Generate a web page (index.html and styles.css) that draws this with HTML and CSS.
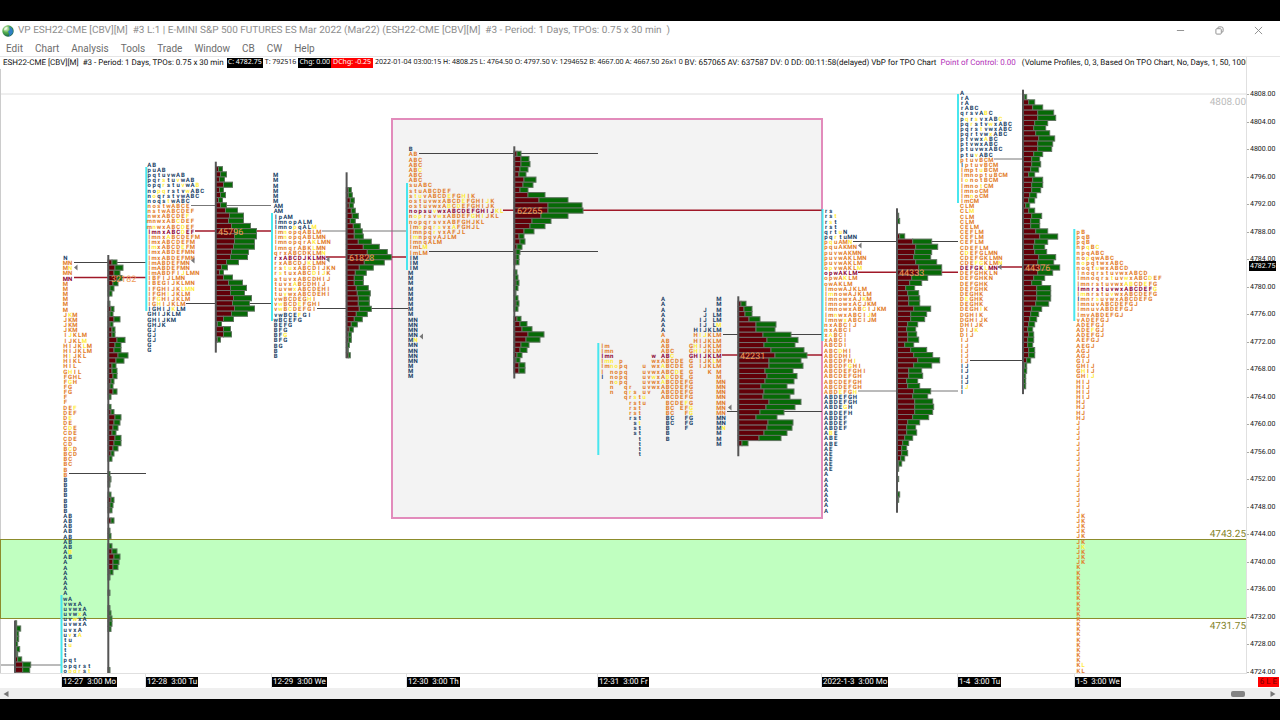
FILE: index.html
```html
<!DOCTYPE html>
<html lang="en">
<head>
<meta charset="utf-8">
<title>VP ESH22-CME</title>
<link rel="stylesheet" href="styles.css">
</head>
<body>
<div class="app">
  <header class="titlebar">
    <svg class="logo" viewBox="0 0 12 12" aria-hidden="true">
      <defs><radialGradient id="globe" cx="0.35" cy="0.3" r="0.75"><stop offset="0" stop-color="#e9f8d8"/><stop offset="0.45" stop-color="#58b04c"/><stop offset="1" stop-color="#0d5a4a"/></radialGradient></defs>
      <circle cx="6" cy="6" r="5.7" fill="url(#globe)"/>
      <path d="M7 1.5C9.6 2.2 11.2 4.6 10.9 7.3 10 9.500 8.500 10.700 6.800 11.200 7.800 9.500 7.400 8.300 6.300 7.400 5.600 6.600 6.700 5.800 7.500 5.200 8.200 4.200 7.300 3 7 1.500Z" fill="#2f7fc4"/>
      <path d="M2 4.200C3 2.400 4.400 1.800 5.600 2 5.300 3.600 4 4.700 2.500 5.600Z" fill="#f4fbe9" opacity="0.85"/>
    </svg>
    <h1 class="title">VP ESH22-CME [CBV][M]  #3 L:1 | E-MINI S&amp;P 500 FUTURES ES Mar 2022 (Mar22) (ESH22-CME [CBV][M]  #3 - Period: 1 Days, TPOs: 0.75 x 30 min  )</h1>
    <div class="controls">
      <button class="control" aria-label="Minimize"><svg viewBox="0 0 10 10"><path d="M1 5H9"/></svg></button>
      <button class="control" aria-label="Restore"><svg viewBox="0 0 10 10"><rect x="1" y="3" width="6" height="6" rx="1"/><path d="M3 2.500Q3 1 4.500 1H7Q9 1 9 3V5.500Q9 7 7.500 7"/></svg></button>
      <button class="control" aria-label="Close"><svg viewBox="0 0 10 10"><path d="M1 1L9 9M9 1L1 9"/></svg></button>
    </div>
  </header>
  <nav class="menu">
    <button>Edit</button><button>Chart</button><button>Analysis</button><button>Tools</button><button>Trade</button><button>Window</button><button>CB</button><button>CW</button><button>Help</button>
  </nav>
  <main class="workspace">
    <section class="pane">
      <div class="info">
        <span class="symbol">ESH22-CME [CBV][M]  #3 - Period: 1 Days, TPOs: 0.75 x 30 min</span>
        <span class="tag">C: 4782.75</span>
        <span class="trades">T: 792516</span>
        <span class="tag">Chg: 0.00</span>
        <span class="tag tag-down">DChg: -0.25</span>
        <span class="quote">2022-01-04 03:00:15 H: 4808.25 L: 4764.50 O: 4797.50 V: 1294652 B: 4667.00 A: 4667.50 26x1 0 </span>
        <span class="totals">BV: 657065 AV: 637587 DV: 0 DD: 00:11:58(delayed) VbP for TPO Chart</span>
        <span class="poc-info">Point of Control: 0.00</span>
        <span class="study">(Volume Profiles, 0, 3, Based On TPO Chart, No, Days, 1, 50, 1000</span>
      </div>
      <svg class="chart" id="chart" viewBox="0 69 1246 604" preserveAspectRatio="none" role="img" aria-label="TPO and volume profile chart"></svg>
    </section>
    <aside class="prices" id="prices"><span class="last-price">4782.75</span></aside>
  </main>
  <div class="dates">
    <span></span><span><b>12-27  3:00 Mo</b></span><span><b>12-28  3:00 Tu</b></span><span><b>12-29  3:00 We</b></span><span><b>12-30  3:00 Th</b></span><span><b>12-31  3:00 Fr</b></span><span><b>2022-1-3  3:00 Mo</b></span><span><b>1-4  3:00 Tu</b></span><span><b>1-5  3:00 We</b></span>
    <i class="status">6 L E</i>
  </div>
  <div class="scroll">
    <button aria-label="Scroll left"><svg viewBox="0 0 6 6"><path d="M5.500 0V6L0.500 3Z"/></svg></button>
    <span class="thumb"></span>
    <button aria-label="Scroll right"><svg viewBox="0 0 6 6"><path d="M0.500 0V6L5.500 3Z"/></svg></button>
  </div>
</div>
<script src="chart.js"></script>
</body>
</html>
```
FILE: styles.css
```css
* { box-sizing: border-box; }
body { margin: 0; background: #000; font-family: Roboto, "Open Sans", sans-serif; text-rendering: geometricPrecision; }
button { border: 0; background: none; padding: 0; margin: 0; font: inherit; color: inherit; }
.app { display: flex; flex-direction: column; height: 100vh; border: solid #000; border-width: 21px 0; background: #fff; }
.titlebar { display: flex; align-items: center; height: 19px; flex: none; padding: 0 12px 0 2px; }
.logo { width: 12px; height: 12px; flex: none; }
.title { flex: 1; margin: 0 0 0 4px; font-size: 10px; font-weight: 400; line-height: 16px; color: #8e8e8e; white-space: pre; }
.controls { display: flex; gap: 19px; }
.control { width: 20px; height: 18px; display: flex; align-items: center; justify-content: center; }
.control svg { width: 9px; height: 9px; fill: none; stroke: #888; stroke-width: 1; }
.menu { display: flex; gap: 12px; height: 16px; flex: none; padding-left: 6px; font-size: 10px; line-height: 18px; color: #6c6c6c; }
.workspace { flex: 1; min-height: 0; display: flex; border-top: 1px solid #e6e6e6; }
.pane { flex: 1; min-width: 0; display: flex; flex-direction: column; border: solid #e0e0e0; border-width: 0 1px 1px 0; }
.info { display: flex; align-items: center; height: 12px; flex: none; padding: 0 0 1px 3px; overflow: hidden; font-size: 8px; line-height: 10px; color: #111; white-space: pre; }
.info span { flex: none; }
.info .symbol { margin-right: 3px; }
.info .tag, .info .trades, .info .quote { font-family: "Noto Sans", "Open Sans", sans-serif; font-size: 7px; }
.info .tag { background: #000; color: #fff; padding: 0 1px; }
.info .tag-down { background: #f00; padding: 0 2px; }
.info .trades { margin: 0 2px; }
.info .quote { margin-left: 2px; }
.info .poc-info { color: #b22fb8; margin: 0 6px 0 4px; }
.chart { display: block; width: 100%; flex: 1; min-height: 0; overflow: hidden; }
.prices { position: relative; width: 33px; flex: none; display: flex; flex-direction: column; justify-content: space-between; padding-top: 32px; overflow: hidden; font-size: 7px; line-height: 10px; color: #111; }
.price { position: relative; padding-left: 3px; height: 10px; flex: none; }
.price::before { content: ""; position: absolute; left: 0; top: 5px; width: 2px; height: 1px; background: #aaa; }
.price:last-child { margin-bottom: -3px; }
.last-price { position: absolute; z-index: 1; left: 2px; top: 33%; padding: 0 1px; background: #000; color: #fff; line-height: 10px; }
.dates { display: grid; grid-template-columns: 62fr 84fr 126fr 135fr 191fr 224fr 136fr 117fr 183fr 22px; height: 14px; flex: none; align-items: center; font-size: 8px; line-height: 10px; }
.dates span { height: 14px; padding: 3px 0 0 0; border-right: 1px solid #e2e2e2; white-space: pre; display: flex; align-items: flex-start; }
.dates span:nth-of-type(9) { border-right: 0; }
.dates b { font-weight: 400; background: #000; color: #fff; padding: 0 1px; }
.status { font-style: normal; background: #f00; color: #700; text-align: center; margin: 2px 1px 0 0; }
.scroll { display: flex; align-items: center; height: 11px; flex: none; padding: 0 4px 0 3px; background: #efefef; }
.scroll button { width: 6px; height: 11px; display: flex; align-items: center; }
.scroll svg { width: 6px; height: 6px; fill: #777; }
.thumb { width: 14px; height: 6px; margin: 0 25px 0 auto; border-radius: 2px; background: #848484; }

.tpo { font: 700 6px Roboto, "Open Sans", sans-serif; text-anchor: middle; }
.out { fill: #213f66; }
.va { fill: #e27c28; }
.poc { fill: #8c0030; }
.single { fill: #ffec38; }
.bid { fill: #620008; stroke: #746c6c; stroke-width: 1; }
.ask { fill: #066a06; stroke: #5f745f; stroke-width: 1; }
.spine { fill: #555; }
.open-range { fill: #48e6ee; }
.edge { stroke: #444; stroke-width: 1; }
.edge-soft { stroke: #777; stroke-width: 1; }
.frame { stroke: #ccc; stroke-width: 1; }
.control-line { stroke: #a01828; stroke-width: 1.500; }
.volume { font: 9px Roboto, "Open Sans", sans-serif; fill: #f09a58; }
.marker { fill: #777; }
.range-box { fill: #f3f3f3; stroke: #e28bbb; stroke-width: 2; }
.zone { fill: #c0ffc0; stroke: #8c8c2c; stroke-width: 1; }
.zone-label { font: 10px Roboto, "Open Sans", sans-serif; fill: #84842a; text-anchor: end; }
.high-line { stroke: #dedede; stroke-width: 1; }
.high-label { font: 10px Roboto, "Open Sans", sans-serif; fill: #bcbcbc; text-anchor: end; }
```
FILE: chart.js
```js
const NS = "http://www.w3.org/2000/svg";
const chart = document.getElementById("chart");
const ROW = 5.16;
const CELL = 4.8;
const PERIODS = "lmnopqrstuvwxABCDEFGHIJKLMN";

function add(name, attrs, text, parent = chart) {
  const node = document.createElementNS(NS, name);
  for (const key in attrs) node.setAttribute(key, attrs[key]);
  if (text) node.textContent = text;
  parent.appendChild(node);
  return node;
}
const rep = (s, n) => Array(n).fill(s).join(" ");

// rows: letters per price step; "~" marks a single print, "^" a letter outside the value area.
// vol: "bid,total" widths per price step. lines: [class, y, x1, x2].
const sessions = [
  { x: 65.3, y: 258, va: [1, 42], poc: 4, range: [61.5, 595, 673], axis: 108, count: "32182", cx: 111, cy: 282,
    rows: "N MN M~N MN MN " + rep("M", 6) + " J~KM JKM JKM JKM I~JKLM IJKL~M HIJK~LM HIJKLM H~IJKL HIKL HIL G~HIL FGHL F~GH FG FG F F DE~F DEF D~E DE C~DE CDE CDE CD B~CD BCD BC BC B B " + rep("B", 7) + " " + rep("AB", 7) + " A~B AB " + rep("A", 7) + " wA vwxA uvwxA uvw~xA uv~wxA uvwxA uvxA u~vx~A tu t~u t t pqt opqrst o~p~q~rs~t",
    vol: "0,1 4,9 7,15 6,12 9,14 5,10 2,6 1,4 0,1 1,2 3,6 2,5 6,12 2,5 4,7 4,7 9,17 7,13 6,13 10,20 8,16 4,8 4,9 5,9 3,6 2,5 5,9 1,3 0,1 1,3 3,6 7,13 6,12 5,10 4,8 7,13 6,13 5,10 3,6 1,4 0,1 0,1 0,2 2,3 1,2 0,1 1,3 3,6 2,5 2,4 0,1 3,6 0,1 1,2 1,3 0,1 1,4 4,9 6,12 5,11 5,10 2,5 1,2 0,1 0,1 1,2 0,1 0,1 1,2 1,3 2,4 1,4 1,3 0,1 0,1 0,1 0,1 0,1 0,1 0,1 1,2",
    lines: [["edge", 262.5, 74, 146], ["control-line", 277.5, 74, 146], ["edge", 473.5, 69, 146]], mark: [76, 267.5] },
  { x: 149.3, y: 164.7, va: [8, 27], poc: 13, range: [146.3, 167, 311], axis: 215.5, count: "45796", cx: 218, cy: 235,
    rows: "AB puAB pqtuvwAB pqr~stu~vwAB opq~rstu~vwA~B no~p~qrstv~wABC n~oqrstvwABC noqs~twABC nostwABCE nstwABCDEF nwxABCDE~F mnwxAB~CDEF m~nwxABC~DEF lmnxABC~DEF lmnx~ABCDEFM lmxABCDEFM l~mxABCD~EFM lmxABDEFMN lmxABDEFMN lmABDEFMN lmABDEFMN lmABDFI~JLMN IBFIJLMN IBEGIJKLMN IFGHIJK~L~M~N IFGH~IJKLM IF~GHIJKLM IG~HIJKLM IGHIJ~KLM GHIJKLM GHIJKM GHJK GJ GJ GJ G G",
    vol: "0,1 3,7 5,11 4,9 8,17 4,8 5,10 3,7 5,11 10,22 14,28 13,28 16,35 19,41 19,41 19,39 18,39 16,33 15,32 11,23 6,12 4,8 8,17 13,27 15,31 15,29 18,36 17,34 19,39 16,32 8,18 2,6 8,15 8,16 2,5 0,1 0,1",
    lines: [["edge-soft", 205.5, 191, 271], ["control-line", 231, 195, 271], ["edge", 303.5, 186, 271]], mark: [193, 260.5] },
  { x: 275.7, y: 175.3, va: [11, 26], poc: 16, range: [272, 213, 321], axis: 346.3, count: "61828", cx: 349, cy: 261,
    rows: rep("M", 6) + " AM AM lpAM lmnopALM lmno~pqAL~M lm~nopqABLM lm~nopqABLMN lmnopqrA~KLMN lmnqrABK~LMN qrxABCDKLM~N rxABCDJKLMN rxABCDJ~KLMN rs~t~uxABCDIJKN r~stuxABC~DI~JK stuvxABCDHIJ tuvx~ABCDHIJ tuvw~xABCDEHI tu~vwxABCDEHI vwBCDEG~HI v~wBCD~EFGHI v~wB~CDEFGI vwBCE~FGI wBCEFG BEFG BFG BF~G BFG BG B B",
    vol: "0,1 0,1 0,1 2,5 2,6 4,8 3,7 5,9 6,12 4,9 7,14 8,16 8,17 12,25 17,33 21,41 23,45 18,38 13,27 9,20 8,17 8,17 10,22 11,24 12,23 12,23 13,25 10,21 8,16 5,11 3,7 2,5 2,5 1,3 1,2 2,4",
    lines: [["edge-soft", 231, 322, 406], ["control-line", 257, 326, 406], ["edge", 308.5, 317, 408]], mark: [328, 259.5] },
  { x: 410.7, y: 149.3, va: [1, 20], poc: 12, range: [407, 183, 270], axis: 514, count: "62265", cx: 517, cy: 214,
    rows: "B AB ABC ABC AB~C ABC ABC suABC stuABCDEF s~t~uvABCD~EFG~HIK ostuvwxABCD~EFGHI~JK ostuvwxA~BC~DEFGHIJK nopsu~vwxABCDEFGHIJ~K~L n~o~prsv~wxABDEF~GH~IJKL nopqrsvxABFGHJKL lm~opq~r~svx~AFGHJL lmnpq~rvxAFJL l~mnpqvAJLM lmnqALM lmL~M lmLM lM lM lM " + rep("M", 9) + " MN MN MN MN M~N MN MN MN MN M M M",
    vol: "0,1 3,7 7,15 7,16 6,14 5,12 10,22 9,19 6,14 14,31 25,54 34,68 34,69 27,54 18,37 16,31 10,20 5,10 6,11 3,8 2,6 2,5 2,5 0,1 1,3 1,4 2,5 1,4 1,2 1,4 2,5 1,4 0,1 3,7 6,13 8,18 14,30 12,26 7,15 6,13 3,8 2,6 5,11 5,11 0,1",
    lines: [["edge", 153.5, 419, 598], ["control-line", 210.3, 503, 822], ["edge", 251.5, 429, 598]], mark: [421.5, 336.5] },
  { x: 602.3, y: 299.3, cell: 4.67, split: true, va: [7, 22], poc: 11, range: [598.3, 343, 455], axis: 738, count: "42231", cx: 740, cy: 359,
    rows: "AM AM AJM AJLM AIJLM AIJL~M AHIJKLM AH~I~JKLM ABHIJKLM lmABG~HIJKLM lmnABCG~H~IJKLM lmnwAB~CGHIJKLM l~m~npwxABCDEGIJK~LM lm~n~opquwx~ABCDEGIJKLM lnopquvwxABC~DEGKM ^lnopquv~wxA~BCDEGM n~opquvwx~ABCDEFGMN nqruvwxABCDEFGMN nq~rsuvABCDEFGMN qr~st~uABCDEFGMN rstuBCDE~FGMN rstBCEF~GMN rstBCF~GMN rstBCFGMN s~tBCFGMN stBFM~N stBM tBM tM t t",
    vol: "0,1 3,8 6,14 7,14 11,22 18,38 18,37 25,53 29,60 26,57 33,66 37,69 31,63 31,65 27,55 29,59 27,56 23,49 26,56 25,52 31,63 28,57 22,46 18,39 30,55 29,54 26,49 21,43 4,10 0,1 0,1",
    lines: [["edge", 334.5, 723, 822], ["control-line", 355, 722, 822], ["edge", 411.5, 727, 822]], mark: [730, 407.5] },
  { x: 826, y: 211.3, va: [6, 35], poc: 12, range: [822.5, 209, 341], axis: 896.7, count: "44333", cx: 899, cy: 276,
    rows: "rs rs~t r~st rst qrt~uN pq~rtuMN p~quAM~N pquAKMN puvwAKMN puvwAKLMN puvwAKLM o~pvwAKL~M opwAKLM opwA~KLM owAKLM lmowAJKLM l~mnowAJKLM lmnowxAJ~KM lmnowxACJKM lmnowxAB~CIJKM lm~nwxABCI~JM lmnw~xABCIJM nxABCIJ nxABCI x~ABCI xABCI ABCDI ABC~DHI ABCDHI ABCDFH~I ABCDF~GHI ABCDEFGHI " + rep("ABCDEFGH", 3) + " ABD~EFG~H ABDEFGH ABDEFGH ABDE~GH ABDEFH ABDEF ABDEF ABDEF A~BE ABE ABE " + rep("AE", 5) + " " + rep("A", 8),
    vol: "0,1 1,2 1,3 0,1 0,1 3,8 16,35 19,41 18,35 17,34 19,40 22,45 22,45 15,31 13,25 9,18 11,22 12,23 12,23 17,34 14,30 14,28 11,21 10,19 11,20 11,22 8,17 14,30 17,36 21,43 17,35 12,25 12,26 10,21 11,23 17,34 16,31 18,36 18,37 18,36 16,32 11,23 10,19 10,20 8,16 6,12 5,10 5,11 4,8 2,5 1,2 0,1 1,2 0,1 0,1 1,3 1,2 0,1 0,1",
    lines: [["edge", 241.5, 853, 958], ["control-line", 272.3, 858, 958], ["edge-soft", 391, 858, 958]], mark: [860, 245.5] },
  { x: 962, y: 92.7, va: [13, 52], poc: 34, range: [958, 94, 203], axis: 1022.7, count: "44376", cx: 1025, cy: 271,
    rows: "A rA rA rABC qrsvA~BC p~qr~svxAB~C pq~rstv~wxABC pqrs~tvwxABC pqrtvw~xABC ptvwx~ABC ptvwxABC ptuvwxABC ptu~vABC ptuvBCM ^lptuvBCM lmpt~uBCM lmnoptuBCM l~onotBCM lmno~tCM lmnoCM lm~noCM lmCM CLM CL~M CLM CLM CELM CEFLM CEFLM CEFLM CDEFLM C~DEFGLMN CDEFGKLMN CDE~F~GKLM~N DEFGK~LMN DEFGHKLN DEFGHKN DEFGHK DEFGHK DEGHK D~EGHK DEGHK DEGH~IK DGHIK DGHIJK DHIJK DIJ~K DIJ " + rep("IJ", 9) + " I~J I",
    vol: "0,1 2,4 6,12 10,20 15,31 15,33 12,25 11,23 13,27 16,32 15,30 15,29 11,20 9,17 9,18 8,16 6,12 10,20 9,20 9,18 7,14 6,12 3,7 6,12 9,19 8,17 8,17 13,25 17,35 12,25 11,22 12,24 16,33 15,31 18,37 15,30 11,22 9,19 14,28 14,28 14,28 13,26 9,19 8,16 7,14 6,12 5,10 6,11 5,11 5,10 6,12 6,12 4,8 2,4 1,4 1,3 1,3 1,3 0,1",
    lines: [["edge-soft", 159, 994, 1022], ["control-line", 267, 998, 1022], ["edge", 360.5, 970, 1022]], mark: [1000, 267] },
  { x: 1078.3, y: 232, va: [0, 85], poc: 11, range: [1074.3, 229, 321], lines: [],
    rows: "pB pqB pqB np~qB~C npqABC no~pqwABC n~opqtwxABC noqt~uwxABCD lnoqrstuvwxABCD lmnoqrs~tuv~wxABC~DEF lmnrstuvwx~A~BCD~EFG lmnrstuvwxABCDEF~G l~mnrstu~vwxABCDEFG ^lmnr~suvwxABCDEFG lmnuvABCDEFGJ lmnuvABDEFGJ lmvABDEFGJ vADEFGJ ADEFGJ ADE~FGJ ADEFGJ AEFGJ AEGJ AGJ AGJ GIJ GHIJ G~HIJ GH~I~J " + rep("HIJ", 4) + " " + rep("HJ", 4) + " " + rep("J", 18) + " " + rep("JK", 6) + " J~K JK JK JK " + rep("K", 19) + " K~L KL" }
];

function drawBars(axis, y, vol) {
  const rows = vol.split(" ");
  rows.forEach((pair, i) => {
    const [bid, total] = pair.split(",").map(Number);
    const top = (y + i * ROW - 3.2).toFixed(2);
    if (total < 2) return;
    if (bid > 0) add("rect", { class: "bid", x: axis, y: top, width: bid, height: ROW });
    add("rect", { class: "ask", x: axis + bid, y: top, width: total - bid, height: ROW });
  });
  add("rect", { class: "spine", x: axis - 0.7, y: y - 3, width: 2, height: rows.length * ROW });
}

function drawLetters(s) {
  s.rows.split(" ").forEach((row, i) => {
    const inside = i >= s.va[0] && i <= s.va[1];
    const base = i === s.poc ? "poc" : inside ? "va" : "out";
    const line = add("text", { class: "tpo", y: (s.y + i * ROW + 2).toFixed(2) });
    let kind = base, col = 0;
    for (const ch of row) {
      if (ch === "~") { kind = "single"; continue; }
      if (ch === "^") { kind = "out"; continue; }
      const slot = s.split ? PERIODS.indexOf(ch) : col;
      add("tspan", { class: kind, x: (s.x + slot * (s.cell || CELL)).toFixed(1) }, ch, line);
      kind = base;
      col++;
    }
  });
}

add("line", { class: "high-line", x1: 0, x2: 1246, y1: 94, y2: 94 });
add("text", { class: "high-label", x: 1246, y: 104.5 }, "4808.00");
add("rect", { class: "range-box", x: 392, y: 119, width: 430, height: 399 });
add("rect", { class: "zone", x: 0.5, y: 539.5, width: 1247, height: 79 });
add("text", { class: "zone-label", x: 1246, y: 536.5 }, "4743.25");
add("text", { class: "zone-label", x: 1246, y: 629 }, "4731.75");
add("line", { class: "edge-soft", x1: 0, x2: 61, y1: 665, y2: 665 });
for (const s of sessions) for (const [kind, y, x1, x2] of s.lines) add("line", { class: kind, x1, x2, y1: y, y2: y });
drawBars(14.700, 624, "1,2 2,6 2,4 2,4 1,3 2,5 2,3 3,7 8,16 8,15");
for (const s of sessions) {
  if (s.vol) drawBars(s.axis, s.y, s.vol);
  const [x, top, bottom] = s.range;
  add("rect", { class: "open-range", x: x - 1, y: top, width: 2, height: bottom - top });
  drawLetters(s);
  if (s.count) add("text", { class: "volume", x: s.cx, y: s.cy }, s.count);
  if (s.mark) add("path", { class: "marker", d: `M${s.mark[0] - 2} ${s.mark[1]}l3.500 -3v6z` });
}
add("line", { class: "frame", x1: 0.5, x2: 0.5, y1: 69, y2: 539 });
add("line", { class: "frame", x1: 0.5, x2: 0.5, y1: 619, y2: 673 });

const prices = document.getElementById("prices");
for (let p = 4808; p >= 4724; p -= 4) {
  const label = document.createElement("span");
  label.className = "price";
  label.textContent = p.toFixed(2);
  prices.appendChild(label);
}
```
